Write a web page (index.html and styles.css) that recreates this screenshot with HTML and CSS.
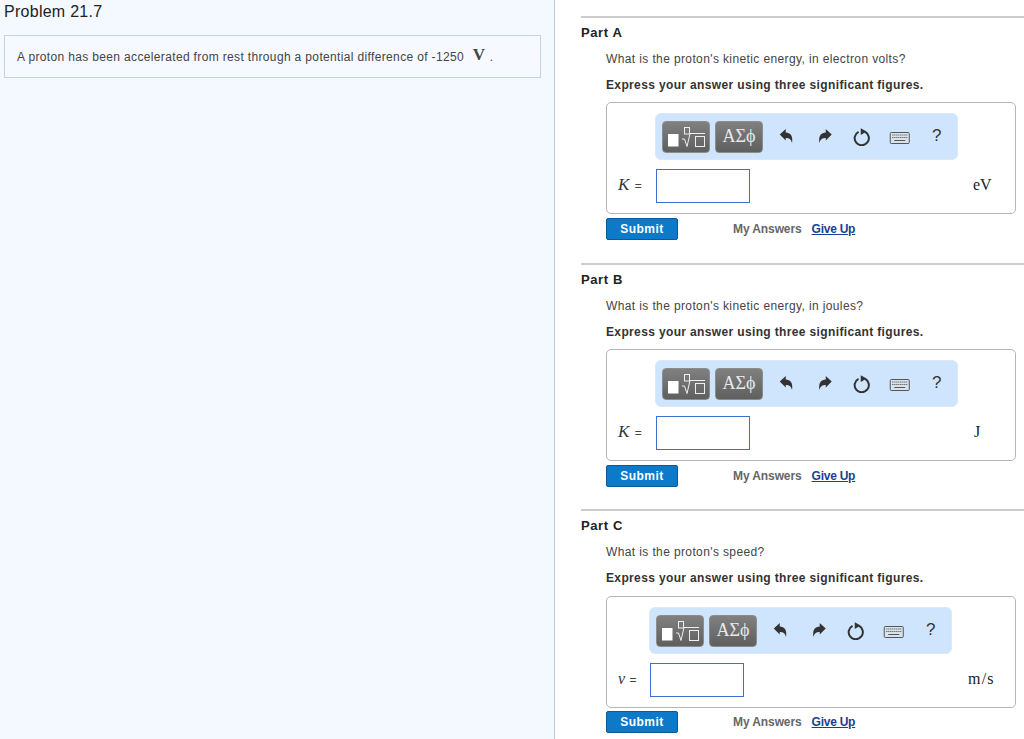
FILE: index.html
```html
<!DOCTYPE html>
<html lang="en">
<head>
<meta charset="utf-8">
<title>Problem 21.7</title>
<link rel="stylesheet" href="styles.css">
</head>
<body>
<svg class="defs" width="0" height="0" aria-hidden="true">
  <symbol id="i-template" viewBox="0 0 48 32">
    <rect x="6" y="13" width="10.500" height="12.500" fill="#fff"/>
    <rect x="22.500" y="6.500" width="5" height="6.500" fill="none" stroke="#eee"/>
    <path d="M20 18h2.500l2.500 7.500L28 12.500h15" fill="none" stroke="#eee"/>
    <rect x="33.500" y="15.500" width="9" height="10" fill="none" stroke="#eee"/>
  </symbol>
  <symbol id="i-undo" viewBox="0 0 16 16">
    <path d="M1 6.500 7 1v3.500c4.500.2 7.500 3 6.300 10.500-1-4-3-5-6.300-5V12.500z" fill="#333"/>
  </symbol>
  <symbol id="i-redo" viewBox="0 0 16 16">
    <path d="M15 6.500 9 1v3.500c-4.500.2-7.500 3-6.300 10.500 1-4 3-5 6.300-5V12.500z" fill="#333"/>
  </symbol>
  <symbol id="i-reset" viewBox="0 0 18 18">
    <path d="M5.800 3.800A7.100 7.100 0 1 0 12 3.700" fill="none" stroke="#333" stroke-width="2"/>
    <path d="M8 .2 13.800 3.600 8 7z" fill="#333"/>
  </symbol>
  <symbol id="i-keyboard" viewBox="0 0 20 12">
    <rect x=".5" y=".5" width="19" height="11" rx="1" fill="#d8e3ee" stroke="#555"/>
    <path d="M2.500 3h15M2.500 5.500h15" stroke="#555" stroke-dasharray="1.200 .8"/>
    <path d="M4.500 8.500h11" stroke="#555" stroke-width="1.200"/>
  </symbol>
</svg>
<div class="page">
  <aside class="left">
    <h1 class="problem-title">Problem 21.7</h1>
    <div class="statement">A proton has been accelerated from rest through a potential difference of -1250 <span class="unit-inline">V</span> .</div>
  </aside>
  <main class="right">
    <section class="part part-a">
      <h2 class="part-title">Part A</h2>
      <p class="question">What is the proton's kinetic energy, in electron volts?</p>
      <p class="express">Express your answer using three significant figures.</p>
      <div class="answer">
        <div class="toolbar">
          <span class="tool-btn"><svg class="ico-template"><use href="#i-template"/></svg></span>
          <span class="tool-btn greek">ΑΣϕ</span>
          <span class="tools">
            <svg class="ico"><use href="#i-undo"/></svg>
            <svg class="ico"><use href="#i-redo"/></svg>
            <svg class="ico ico-reset"><use href="#i-reset"/></svg>
            <svg class="ico ico-kbd"><use href="#i-keyboard"/></svg>
            <span class="help">?</span>
          </span>
        </div>
        <div class="entry">
          <span class="label"><i>K</i> =</span>
          <span class="field"></span>
          <span class="unit">eV</span>
        </div>
      </div>
      <div class="actions"><span class="submit">Submit</span><span class="my-answers">My Answers</span><a class="give-up" href="#">Give Up</a></div>
    </section>
    <section class="part part-b">
      <h2 class="part-title">Part B</h2>
      <p class="question">What is the proton's kinetic energy, in joules?</p>
      <p class="express">Express your answer using three significant figures.</p>
      <div class="answer">
        <div class="toolbar">
          <span class="tool-btn"><svg class="ico-template"><use href="#i-template"/></svg></span>
          <span class="tool-btn greek">ΑΣϕ</span>
          <span class="tools">
            <svg class="ico"><use href="#i-undo"/></svg>
            <svg class="ico"><use href="#i-redo"/></svg>
            <svg class="ico ico-reset"><use href="#i-reset"/></svg>
            <svg class="ico ico-kbd"><use href="#i-keyboard"/></svg>
            <span class="help">?</span>
          </span>
        </div>
        <div class="entry">
          <span class="label"><i>K</i> =</span>
          <span class="field"></span>
          <span class="unit unit-j">J</span>
        </div>
      </div>
      <div class="actions"><span class="submit">Submit</span><span class="my-answers">My Answers</span><a class="give-up" href="#">Give Up</a></div>
    </section>
    <section class="part part-c">
      <h2 class="part-title">Part C</h2>
      <p class="question">What is the proton's speed?</p>
      <p class="express">Express your answer using three significant figures.</p>
      <div class="answer narrow">
        <div class="toolbar">
          <span class="tool-btn"><svg class="ico-template"><use href="#i-template"/></svg></span>
          <span class="tool-btn greek">ΑΣϕ</span>
          <span class="tools">
            <svg class="ico"><use href="#i-undo"/></svg>
            <svg class="ico"><use href="#i-redo"/></svg>
            <svg class="ico ico-reset"><use href="#i-reset"/></svg>
            <svg class="ico ico-kbd"><use href="#i-keyboard"/></svg>
            <span class="help">?</span>
          </span>
        </div>
        <div class="entry">
          <span class="label"><i>v</i> =</span>
          <span class="field"></span>
          <span class="unit">m/s</span>
        </div>
      </div>
      <div class="actions"><span class="submit">Submit</span><span class="my-answers">My Answers</span><a class="give-up" href="#">Give Up</a></div>
    </section>
  </main>
</div>
</body>
</html>
```
FILE: styles.css
```css
* { box-sizing: border-box; }
html, body { margin: 0; height: 100%; overflow: hidden; }
body { font-family: "Liberation Sans", Arial, sans-serif; font-size: 12px; color: #444; background: #fff; }
.defs { position: absolute; }
.page { display: flex; height: 739px; }

.left { flex: 0 0 555px; background: #f4f8ff; border-right: 1px solid #b7cbdd; padding: 0 13px 0 4px; }
.problem-title { margin: 3px 0 14px; font-size: 16px; line-height: 18px; font-weight: 400; letter-spacing: .27px; color: #222; }
.statement { height: 43px; border: 1px solid #c3d3e2; background: #f6f9ff; padding: 0 13px 0 12px; display: flex; align-items: center; font-size: 12px; letter-spacing: .35px; white-space: pre-wrap; color: #444; }
.unit-inline { font-family: "Liberation Serif", serif; font-weight: 700; font-size: 17px; letter-spacing: 0; margin: -3px 1px 0 5px; }

.right { flex: 1; padding: 16px 0 0 26px; }
.part { height: 247px; border-top: 2px solid #ccc; }
.part-b { height: 246px; }
.part-title { margin: 6px 0 8px; font-size: 13px; line-height: 18px; font-weight: 700; letter-spacing: .6px; color: #222; }
.question { margin: 0 0 8px 25px; line-height: 18px; font-size: 12px; letter-spacing: .38px; color: #444; }
.express { margin: 0 0 8px 25px; line-height: 18px; font-size: 12px; font-weight: 700; letter-spacing: .36px; color: #333; }

.answer { width: 410px; height: 112px; margin-left: 25px; border: 1px solid #b5b5b5; border-radius: 5px; padding: 10px 0 0 48px; background: #fff; }
.answer.narrow { padding-left: 42px; }
.part-c .answer { margin-top: 9px; }
.toolbar { width: 303px; height: 47px; background: #cfe5fd; border: 1px solid #dbe8f5; border-radius: 6px; display: flex; align-items: center; padding-left: 6px; gap: 5px; }
.tool-btn { flex: none; width: 48px; height: 32px; border: 1px solid #8c8c8c; border-radius: 4px; background: linear-gradient(#808080, #5f5f5f); display: flex; align-items: center; justify-content: center; color: #e8e8e8; }
.ico-template { width: 48px; height: 32px; display: block; flex: none; margin: -1px; }
.greek { font-family: "Liberation Serif", serif; font-size: 18px; }
.tools { display: flex; align-items: center; flex: none; }
.ico { width: 37.5px; height: 16px; display: block; flex: none; margin-top: -2px; }
.ico-reset { height: 18px; margin-top: 1px; }
.ico-kbd { height: 12px; margin-top: 3px; }
.help { width: 37.5px; text-align: center; font-size: 17px; color: #333; margin-top: -2px; }

.entry { display: flex; align-items: center; height: 34px; margin: 9px 0 0 -48px; }
.narrow .entry { margin-left: -42px; }
.label { width: 49px; padding: 0 0 3px 11px; font-size: 12px; color: #444; }
.label i { font-family: "Liberation Serif", serif; font-size: 17px; color: #333; margin-right: 2px; }
.narrow .label { width: 43px; }
.narrow .label i { font-size: 16px; margin-right: 1px; }
.field { width: 94px; height: 34px; border: 1px solid #3b6fd1; background: #fff; flex: none; }
.unit { margin-left: auto; width: 42px; padding-bottom: 3px; text-align: left; font-family: "Liberation Serif", serif; font-size: 16px; color: #222; }
.unit-j { padding-left: 1px; }
.narrow .unit { width: 47px; letter-spacing: 1.2px; }

.actions { display: flex; align-items: center; margin: 4px 0 0 25px; height: 22px; }
.part-c .actions { margin-top: 3px; }
.submit { width: 72px; height: 22px; border: 1px solid #0a5a98; border-radius: 2px; background: #0c79c9; color: #fff; font-weight: 700; font-size: 12px; letter-spacing: .5px; text-align: center; line-height: 20px; }
.my-answers { margin-left: 55px; font-weight: 700; color: #666; letter-spacing: -.1px; }
.give-up { margin-left: 10px; font-weight: 700; color: #1b3f94; letter-spacing: -.25px; text-decoration: underline; }
```
